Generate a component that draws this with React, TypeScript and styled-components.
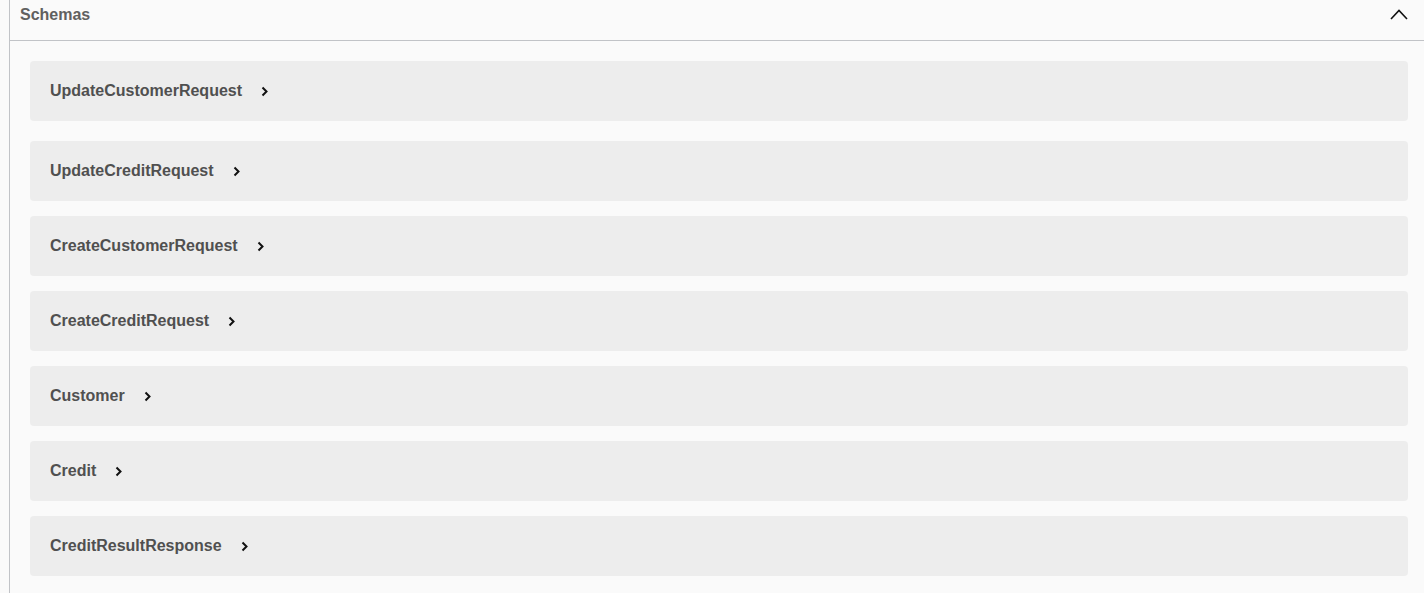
import styled, { createGlobalStyle } from "styled-components";

const schemas = [
  "UpdateCustomerRequest",
  "UpdateCreditRequest",
  "CreateCustomerRequest",
  "CreateCreditRequest",
  "Customer",
  "Credit",
  "CreditResultResponse",
];

function App() {
  return (
    <>
      <GlobalStyle />
      <Section>
        <Header>
          <HeaderTitle>Schemas</HeaderTitle>
          <svg width="18" height="11" viewBox="0 0 18 11">
            <polyline
              points="1,10 9,1.5 17,10"
              fill="none"
              stroke="#111"
              strokeWidth="1.6"
            />
          </svg>
        </Header>
        <ModelList>
          {schemas.map((name, index) => (
            <ModelBox key={name} $first={index === 0}>
              <ModelTitle>{name}</ModelTitle>
              <Toggle width="8" height="11" viewBox="0 0 8 11">
                <polyline
                  points="1.5,1.5 5.5,5.5 1.5,9.5"
                  fill="none"
                  stroke="#111"
                  strokeWidth="2"
                />
              </Toggle>
            </ModelBox>
          ))}
        </ModelList>
      </Section>
    </>
  );
}

const GlobalStyle = createGlobalStyle`
  html, body {
    margin: 0;
    overflow: hidden;
    background: #fafafa;
  }
  body {
    font-family: "Liberation Sans", Arial, sans-serif;
  }
`;

const Section = styled.section`
  width: 1418px;
  margin-left: 9px;
  border-left: 1px solid #c1c3c7;
  background: #fafafa;
  min-height: 593px;
`;

const Header = styled.header`
  height: 41px;
  box-sizing: border-box;
  display: flex;
  justify-content: space-between;
  align-items: flex-start;
  padding: 6px 20px 0 10px;
  border-bottom: 1px solid #c1c3c7;

  svg {
    margin-top: 3px;
  }
`;

const HeaderTitle = styled.h4`
  margin: 0;
  font-size: 16px;
  line-height: 18px;
  font-weight: 700;
  color: #606060;
`;

const ModelList = styled.div`
  padding: 0 20px;
`;

const ModelBox = styled.div<{ $first: boolean }>`
  height: 60px;
  display: flex;
  align-items: center;
  padding: 0 20px;
  margin-top: ${({ $first }) => ($first ? "20px" : "0")};
  margin-bottom: ${({ $first }) => ($first ? "20px" : "15px")};
  border-radius: 4px;
  background: #ededed;
`;

const ModelTitle = styled.span`
  font-size: 16px;
  font-weight: 700;
  color: #505050;
  line-height: 20px;
`;

const Toggle = styled.svg`
  margin-left: 19px;
  margin-top: 1px;
`;

export default App;
